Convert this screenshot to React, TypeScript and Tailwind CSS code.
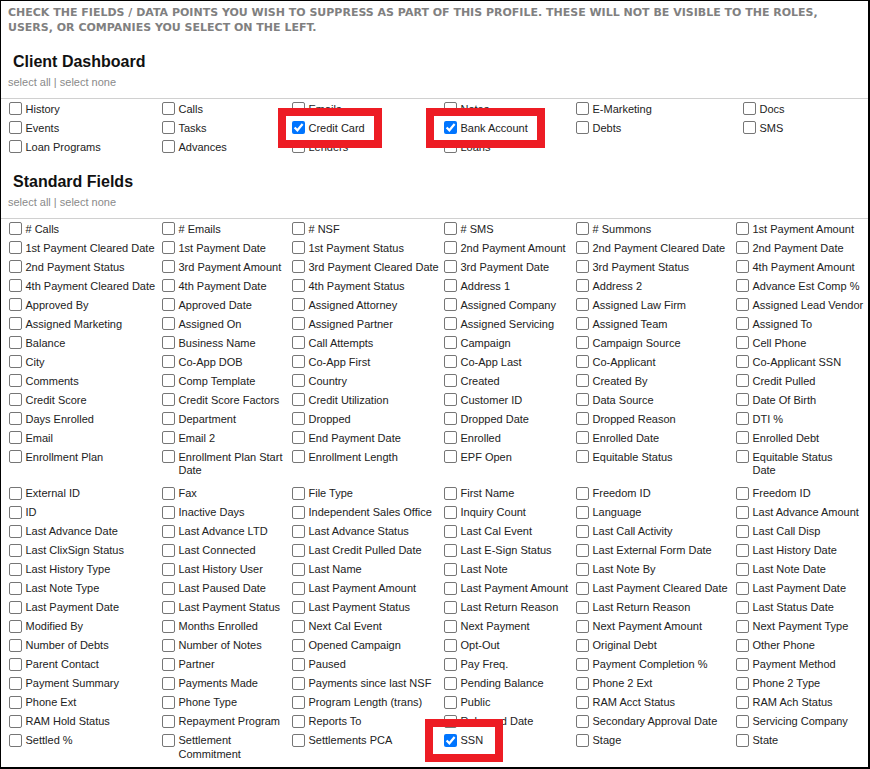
import React from 'react';

// rows of the two field tables; "\n" marks where the label wraps
const clientRows: string[][] = [
  ['History', 'Calls', 'Emails', 'Notes', 'E-Marketing', 'Docs'],
  ['Events', 'Tasks', 'Credit Card', 'Bank Account', 'Debts', 'SMS'],
  ['Loan Programs', 'Advances', 'Lenders', 'Loans', '', ''],
];

const standardRows: string[][] = [
  ['# Calls', '# Emails', '# NSF', '# SMS', '# Summons', '1st Payment Amount'],
  ['1st Payment Cleared Date', '1st Payment Date', '1st Payment Status', '2nd Payment Amount', '2nd Payment Cleared Date', '2nd Payment Date'],
  ['2nd Payment Status', '3rd Payment Amount', '3rd Payment Cleared Date', '3rd Payment Date', '3rd Payment Status', '4th Payment Amount'],
  ['4th Payment Cleared Date', '4th Payment Date', '4th Payment Status', 'Address 1', 'Address 2', 'Advance Est Comp %'],
  ['Approved By', 'Approved Date', 'Assigned Attorney', 'Assigned Company', 'Assigned Law Firm', 'Assigned Lead Vendor'],
  ['Assigned Marketing', 'Assigned On', 'Assigned Partner', 'Assigned Servicing', 'Assigned Team', 'Assigned To'],
  ['Balance', 'Business Name', 'Call Attempts', 'Campaign', 'Campaign Source', 'Cell Phone'],
  ['City', 'Co-App DOB', 'Co-App First', 'Co-App Last', 'Co-Applicant', 'Co-Applicant SSN'],
  ['Comments', 'Comp Template', 'Country', 'Created', 'Created By', 'Credit Pulled'],
  ['Credit Score', 'Credit Score Factors', 'Credit Utilization', 'Customer ID', 'Data Source', 'Date Of Birth'],
  ['Days Enrolled', 'Department', 'Dropped', 'Dropped Date', 'Dropped Reason', 'DTI %'],
  ['Email', 'Email 2', 'End Payment Date', 'Enrolled', 'Enrolled Date', 'Enrolled Debt'],
  ['Enrollment Plan', 'Enrollment Plan Start\nDate', 'Enrollment Length', 'EPF Open', 'Equitable Status', 'Equitable Status\nDate'],
  ['External ID', 'Fax', 'File Type', 'First Name', 'Freedom ID', 'Freedom ID'],
  ['ID', 'Inactive Days', 'Independent Sales Office', 'Inquiry Count', 'Language', 'Last Advance Amount'],
  ['Last Advance Date', 'Last Advance LTD', 'Last Advance Status', 'Last Cal Event', 'Last Call Activity', 'Last Call Disp'],
  ['Last ClixSign Status', 'Last Connected', 'Last Credit Pulled Date', 'Last E-Sign Status', 'Last External Form Date', 'Last History Date'],
  ['Last History Type', 'Last History User', 'Last Name', 'Last Note', 'Last Note By', 'Last Note Date'],
  ['Last Note Type', 'Last Paused Date', 'Last Payment Amount', 'Last Payment Amount', 'Last Payment Cleared Date', 'Last Payment Date'],
  ['Last Payment Date', 'Last Payment Status', 'Last Payment Status', 'Last Return Reason', 'Last Return Reason', 'Last Status Date'],
  ['Modified By', 'Months Enrolled', 'Next Cal Event', 'Next Payment', 'Next Payment Amount', 'Next Payment Type'],
  ['Number of Debts', 'Number of Notes', 'Opened Campaign', 'Opt-Out', 'Original Debt', 'Other Phone'],
  ['Parent Contact', 'Partner', 'Paused', 'Pay Freq.', 'Payment Completion %', 'Payment Method'],
  ['Payment Summary', 'Payments Made', 'Payments since last NSF', 'Pending Balance', 'Phone 2 Ext', 'Phone 2 Type'],
  ['Phone Ext', 'Phone Type', 'Program Length (trans)', 'Public', 'RAM Acct Status', 'RAM Ach Status'],
  ['RAM Hold Status', 'Repayment Program', 'Reports To', 'Released Date', 'Secondary Approval Date', 'Servicing Company'],
  ['Settled %', 'Settlement\nCommitment', 'Settlements PCA', 'SSN', 'Stage', 'State'],
];

const suppressed = new Set(['Credit Card', 'Bank Account', 'SSN']);

function Checkbox({ checked }: { checked: boolean }) {
  if (checked) {
    return (
      <span className="mt-[3px] flex h-[13px] w-[13px] shrink-0 items-center justify-center rounded-[2px] bg-[#0075ff]">
        <svg viewBox="0 0 13 13" className="h-[13px] w-[13px]">
          <path d="M2.6 6.4 L5.4 9.3 L10.6 3" fill="none" stroke="white" strokeWidth="2.2" />
        </svg>
      </span>
    );
  }
  return <span className="mt-[3px] block h-[13px] w-[13px] shrink-0 rounded-[2px] border border-[#767676] bg-white" />;
}

function Field({ label, tall }: { label: string; tall: boolean }) {
  if (!label) return <div />;
  return (
    <label className="flex items-start gap-[3.5px]">
      <Checkbox checked={suppressed.has(label)} />
      <span className={`whitespace-pre leading-[13.5px] pt-[3.5px] ${tall ? 'pb-[6px]' : 'pb-[2px]'}`}>{label}</span>
    </label>
  );
}

function Section({ title, rows, cols }: { title: string; rows: string[][]; cols: string }) {
  return (
    <section className="mt-[17px]">
      <h2 className="pl-[12px] text-[16px] font-bold leading-[18px] text-[#111]">{title}</h2>
      <div className="mt-[5px] pl-[7px] text-[11px] leading-[12.5px] text-[#8a8a8a]">
        <a>select all</a> | <a>select none</a>
      </div>
      <div className="mt-[9.5px] border-t border-[#d0d0d0]" />
      <div className={`grid ${cols} pl-[8px] text-[11px] text-[#222]`}>
        {rows.map((row, r) => {
          const tall = row.some((l) => l.includes('\n'));
          return row.map((label, c) => <Field key={`${r}-${c}`} label={label} tall={tall} />);
        })}
      </div>
    </section>
  );
}

export default function App() {
  return (
    <div className="relative h-[769px] w-[870px] overflow-hidden border-t border-l border-r-2 border-b-2 border-black bg-white font-['Liberation_Sans',Arial,sans-serif]">
      <p className="pl-[7px] pt-[5px] pb-[1px] pr-[4px] font-['DejaVu_Sans',Verdana,sans-serif] text-[11px] font-bold uppercase leading-[14.5px] text-[#808080]">
        Check the fields / data points you wish to suppress as part of this profile. These will not be visible to the roles,
        users, or companies you select on the left.
      </p>

      <Section title="Client Dashboard" rows={clientRows} cols="grid-cols-[153px_130px_152px_132px_167px_1fr]" />
      <Section title="Standard Fields" rows={standardRows} cols="grid-cols-[153px_130px_152px_132px_160px_1fr]" />

      {/* red annotation boxes drawn over the screenshot */}
      <div className="absolute left-[277px] top-[107px] h-[40px] w-[104px] border-[8px] border-[#ed1c24]" />
      <div className="absolute left-[425px] top-[107px] h-[40px] w-[119px] border-[8px] border-[#ed1c24]" />
      <div className="absolute left-[424px] top-[718px] h-[43px] w-[78px] border-[8px] border-[#ed1c24]" />
    </div>
  );
}
